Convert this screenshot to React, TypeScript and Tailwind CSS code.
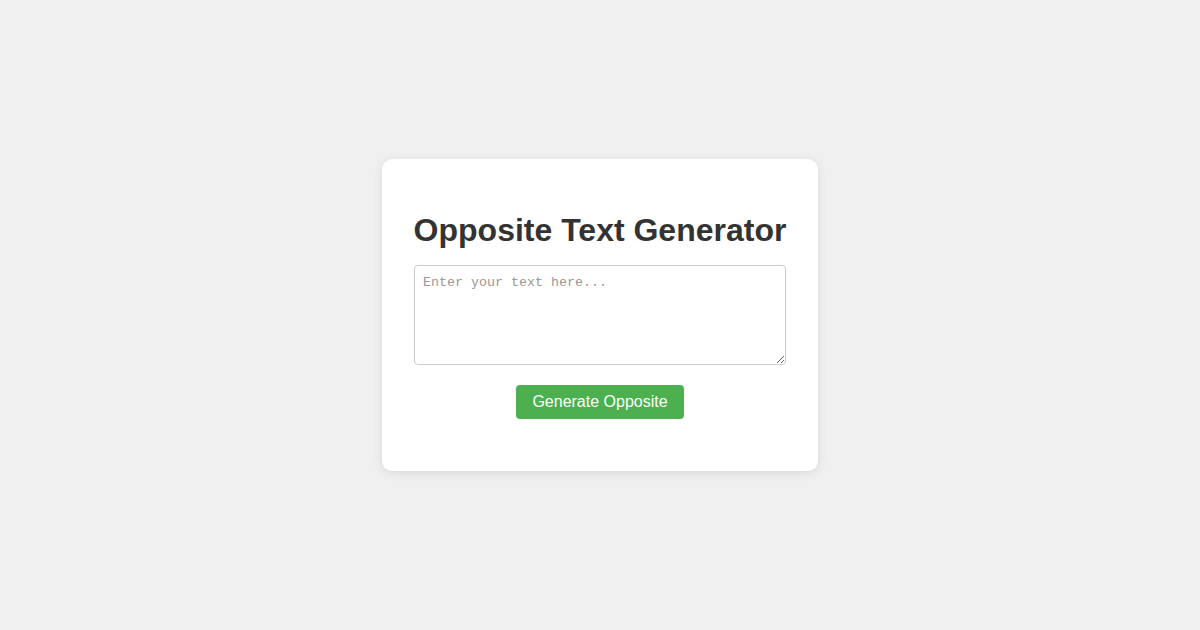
import { useState } from "react";

const App = () => {
  const [text, setText] = useState("");

  return (
    <div className="flex min-h-screen items-center justify-center bg-[#f0f0f0] font-['Liberation_Sans',Arial,sans-serif]">
      <div className="flex w-[436px] flex-col items-center rounded-[10px] bg-white px-8 pt-8 pb-[52px] shadow-[0_2px_10px_rgba(0,0,0,0.1)]">
        <h1 className="mt-[21px] mb-4 whitespace-nowrap text-[32px] leading-[37px] font-bold text-[#333]">
          Opposite Text Generator
        </h1>
        <textarea
          value={text}
          onChange={(e) => setText(e.target.value)}
          placeholder="Enter your text here..."
          className="block h-[100px] w-full rounded-[4px] border border-[#ccc] px-2 pt-[7px] pb-2 font-['Liberation_Mono',monospace] text-[13.333px] text-[#333] placeholder:text-[#999]"
        />
        <button className="mt-5 h-[34px] rounded-[4px] bg-[#4caf50] px-4 text-base text-white">
          Generate Opposite
        </button>
      </div>
    </div>
  );
};

export default App;
